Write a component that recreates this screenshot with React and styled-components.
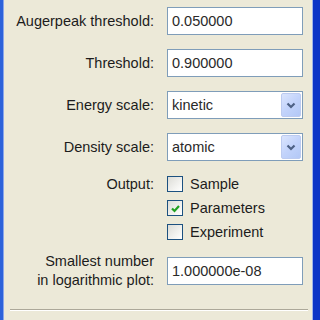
import React from "react";
import styled, { createGlobalStyle } from "styled-components";

const Global = createGlobalStyle`
  html, body {
    margin: 0;
    padding: 0;
    background: #ece9d8;
  }
  * {
    box-sizing: border-box;
  }
`;

export default function App() {
  return (
    <>
      <Global />
      <Frame>
        <Field $gap={0}>
          <Label>Augerpeak threshold:</Label>
          <TextBox defaultValue="0.050000" />
        </Field>
        <Field $gap={14}>
          <Label>Threshold:</Label>
          <TextBox defaultValue="0.900000" />
        </Field>
        <Field $gap={14}>
          <Label>Energy scale:</Label>
          <Combo value="kinetic" />
        </Field>
        <Field $gap={14}>
          <Label>Density scale:</Label>
          <Combo value="atomic" />
        </Field>
        <Field $gap={11} $top>
          <Label $line={24}>Output:</Label>
          <Checks>
            <Check label="Sample" />
            <Check label="Parameters" checked />
            <Check label="Experiment" />
          </Checks>
        </Field>
        <Field $gap={8}>
          <Label $line={19}>
            Smallest number
            <br />
            in logarithmic plot:
          </Label>
          <TextBox defaultValue="1.000000e-08" />
        </Field>
        <Rule />
      </Frame>
    </>
  );
}

function Combo({ value }) {
  return (
    <Select>
      <span>{value}</span>
      <DropButton>
        <svg width="10" height="7" viewBox="0 0 10 7">
          <path d="M1.5 1.5 L5 5 L8.5 1.5" fill="none" stroke="#4d6185" strokeWidth="2.2" />
        </svg>
      </DropButton>
    </Select>
  );
}

function Check({ label, checked }) {
  return (
    <CheckRow>
      <Box>
        {checked && (
          <svg width="11" height="11" viewBox="0 0 11 11">
            <path d="M2 5.5 L4.5 8 L9 3" fill="none" stroke="#21a121" strokeWidth="2.2" />
          </svg>
        )}
      </Box>
      <span>{label}</span>
    </CheckRow>
  );
}

const Frame = styled.div`
  width: 320px;
  height: 320px;
  padding-top: 7px;
  background: #ece9d8;
  border-left: 3px solid #2d62da;
  border-right: 7px solid #0b34c6;
  box-shadow: inset 1px 0 #8aa6ea, inset -1px 0 #9fb4e8;
  font-family: "Liberation Sans", Arial, sans-serif;
  font-size: 14.5px;
  color: #1c1c1c;
  overflow: hidden;
`;

const Field = styled.div`
  display: grid;
  grid-template-columns: 151px 136px;
  column-gap: 13px;
  align-items: ${(p) => (p.$top ? "start" : "center")};
  margin-top: ${(p) => p.$gap}px;
`;

const Label = styled.div`
  text-align: right;
  line-height: ${(p) => p.$line || 28}px;
  white-space: nowrap;
`;

const TextBox = styled.input.attrs({ readOnly: true })`
  width: 136px;
  height: 28px;
  border: 1px solid #7f9db9;
  background: #fff;
  padding: 0 0 0 4px;
  margin: 0;
  font: inherit;
  color: #2a2a2a;
  outline: none;
`;

const Select = styled.div`
  display: flex;
  align-items: center;
  justify-content: space-between;
  width: 136px;
  height: 28px;
  border: 1px solid #7f9db9;
  background: #fff;
  padding: 0 1px 0 4px;
  color: #2a2a2a;
`;

const DropButton = styled.div`
  display: flex;
  align-items: center;
  justify-content: center;
  width: 20px;
  height: 24px;
  border: 1px solid #bccbf0;
  border-radius: 2px;
  background: linear-gradient(135deg, #dbe5fd 0%, #c2d3fb 50%, #b3c8f6 100%);
`;

const Checks = styled.div`
  display: flex;
  flex-direction: column;
`;

const CheckRow = styled.div`
  display: flex;
  align-items: center;
  gap: 7px;
  height: 24px;
`;

const Box = styled.div`
  display: flex;
  align-items: center;
  justify-content: center;
  width: 16px;
  height: 16px;
  border: 1px solid #1c5180;
  background: linear-gradient(135deg, #dcdcd7 0%, #f2f2ef 60%, #ffffff 100%);
`;

const Rule = styled.div`
  margin: 19px 5px 0 7px;
  border-top: 1px solid #aca899;
  border-bottom: 1px solid #ffffff;
`;
